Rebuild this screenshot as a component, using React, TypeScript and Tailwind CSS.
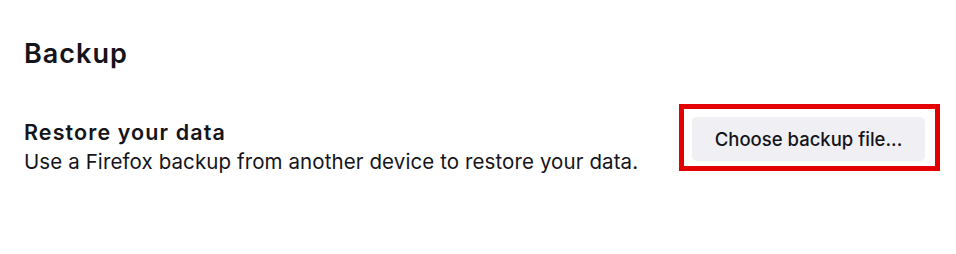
import React from "react";

export default function App() {
  return (
    <div
      className="w-[956px] h-[254px] bg-white text-[#15141a] pl-6 pr-4 pt-[37px]"
      style={{ fontFamily: "Inter, 'Noto Sans', sans-serif" }}
    >
      <h1 className="text-[27px] leading-[34px] font-semibold tracking-[1px]">Backup</h1>
      <div className="mt-[33px] flex items-start justify-between">
        <div className="flex flex-col pt-[15px]">
          <div className="text-[21.5px] leading-[26px] font-semibold tracking-[1.1px]">
            Restore your data
          </div>
          <div className="text-[20.5px] leading-[28px] mt-[3px] tracking-[0.1px]">
            Use a Firefox backup from another device to restore your data.
          </div>
        </div>
        <div className="border-[5px] border-[#e30000] pl-2 pr-[10px] pt-2 pb-[5px]">
          <button className="w-[233px] h-[44px] rounded-[5px] bg-[#f0f0f4] text-[18.5px] leading-[24px] font-medium text-[#15141a]">
            Choose backup file...
          </button>
        </div>
      </div>
    </div>
  );
}
